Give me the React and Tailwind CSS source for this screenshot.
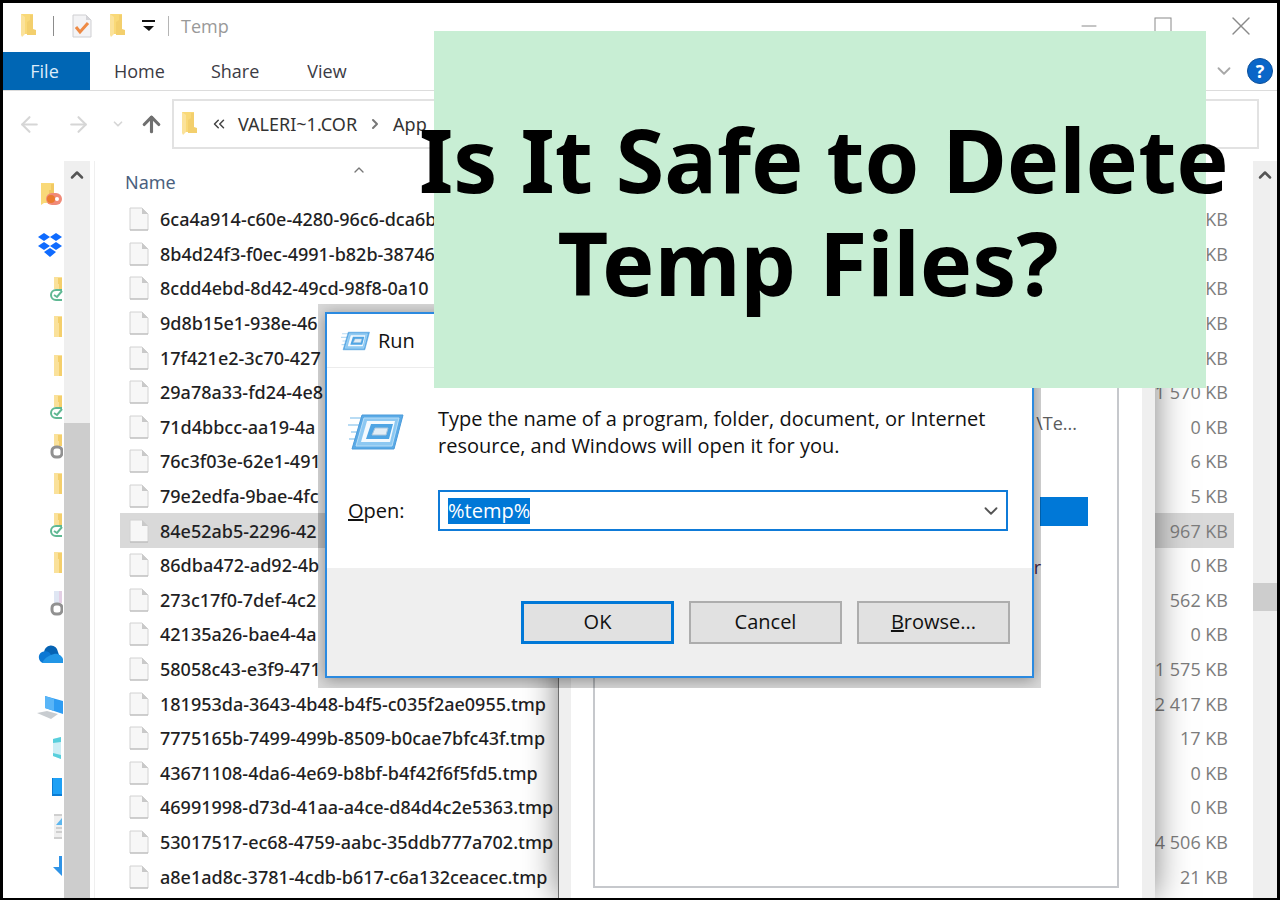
import { useEffect, useRef } from 'react';
import { ArrowLeft, ArrowRight, ArrowUp, ChevronDown, ChevronUp, ChevronRight, ChevronsLeft, Minus, X } from 'lucide-react';

const files = [
  { name: '6ca4a914-c60e-4280-96c6-dca6b', size: 'KB' },
  { name: '8b4d24f3-f0ec-4991-b82b-38746', size: 'KB' },
  { name: '8cdd4ebd-8d42-49cd-98f8-0a10', size: 'KB' },
  { name: '9d8b15e1-938e-46', size: 'KB' },
  { name: '17f421e2-3c70-427', size: 'KB' },
  { name: '29a78a33-fd24-4e8', size: '1 570 KB' },
  { name: '71d4bbcc-aa19-4a', size: '0 KB' },
  { name: '76c3f03e-62e1-491', size: '6 KB' },
  { name: '79e2edfa-9bae-4fc', size: '5 KB' },
  { name: '84e52ab5-2296-42', size: '967 KB', selected: true },
  { name: '86dba472-ad92-4b', size: '0 KB' },
  { name: '273c17f0-7def-4c2', size: '562 KB' },
  { name: '42135a26-bae4-4a', size: '0 KB' },
  { name: '58058c43-e3f9-471', size: '1 575 KB' },
  { name: '181953da-3643-4b48-b4f5-c035f2ae0955.tmp', size: '2 417 KB' },
  { name: '7775165b-7499-499b-8509-b0cae7bfc43f.tmp', size: '17 KB' },
  { name: '43671108-4da6-4e69-b8bf-b4f42f6f5fd5.tmp', size: '0 KB' },
  { name: '46991998-d73d-41aa-a4ce-d84d4c2e5363.tmp', size: '0 KB' },
  { name: '53017517-ec68-4759-aabc-35ddb777a702.tmp', size: '4 506 KB' },
  { name: 'a8e1ad8c-3781-4cdb-b617-c6a132ceacec.tmp', size: '21 KB' },
];

// Icons
const FolderIcon = () => (
  <svg width="18" height="26" viewBox="0 0 18 26" aria-hidden="true">
    <path d="M2 1h12v20H2z" fill="#f9d978" />
    <path d="M11 2h3v14l3 1v5H8V9l3-2z" fill="#f3cf6d" />
    <path d="M2 1l4 3v17l-3 3-1-2z" fill="#fbe29a" />
  </svg>
);

const PageIcon = () => (
  <svg className="block" width="20" height="24" viewBox="0 0 20 24" aria-hidden="true">
    <path d="M1 1h12l6 6v16H1z" fill="#f7f7f7" stroke="#d2d2d2" />
    <path d="M13 1v6h6z" fill="#c9c9c9" />
    <path d="M1 23h18" stroke="#b5b5b5" />
  </svg>
);

const PropertiesIcon = () => (
  <svg width="20" height="24" viewBox="0 0 20 24" aria-hidden="true">
    <path d="M1 1h13l5 5v17H1z" fill="#f3f3f5" stroke="#cfcfd2" />
    <path d="M14 1v5h5z" fill="#d4d4d8" />
    <path d="M4 13l4 5 8-9" fill="none" stroke="#ee8a45" strokeWidth="3" />
  </svg>
);

const RunIcon = ({ className }) => (
  <svg className={className} viewBox="0 0 56 38" aria-hidden="true">
    <path d="M2 5h14M0 12h12M3 19h8M1 26h7" stroke="#b9dcf4" strokeWidth="2" />
    <path d="M14 2h41L46 36H4z" fill="#5aaae6" stroke="#4b9bdb" strokeWidth="1" />
    <path d="M16 5h35l-7 28H8z" fill="#8cc8f2" stroke="#b9def7" strokeWidth="1" />
    <path d="M19 8h28l-5 21H13z" fill="#f4fafe" />
    <path d="M23 11h22l-4 15H18z" fill="#4fa5e4" />
    <path d="M27 15h13l-2 7H24z" fill="#e3eef6" stroke="#a9c6dd" />
  </svg>
);

const MaximizeIcon = () => (
  <svg width="18" height="18" viewBox="0 0 18 18" aria-hidden="true">
    <rect x="1" y="1" width="16" height="16" fill="none" stroke="currentColor" />
  </svg>
);

const NavFolder = ({ badge }) => (
  <svg width="14" height="28" viewBox="0 0 14 28" aria-hidden="true">
    <path d="M5 3h8v21H5z" fill="#fae19a" />
    <path d="M9 4h4v20h-3V10H9z" fill="#f4cf6c" />
    {badge === 'check' && (
      <>
        <path d="M0 15h14v13H0z" fill="#fff" />
        <path d="M13 16H7a5 5 0 1 0 0 10h6" fill="none" stroke="#5fb893" strokeWidth="2" />
        <path d="M5 21l3 2 5-6" fill="none" stroke="#5fb893" strokeWidth="2" />
      </>
    )}
    {badge === 'dot' && (
      <>
        <path d="M0 15h14v13H0z" fill="#fff" />
        <rect x="3" y="16" width="10" height="10" rx="4" fill="none" stroke="#919191" strokeWidth="3" />
      </>
    )}
  </svg>
);

const NavMusic = () => (
  <svg width="14" height="28" viewBox="0 0 14 28" aria-hidden="true">
    <path d="M5 3h8v12H5z" fill="#dfe6f3" />
    <path d="M10 3h3v12h-3z" fill="#e3cfe4" />
    <rect x="3" y="16" width="10" height="10" rx="4" fill="none" stroke="#919191" strokeWidth="3" />
  </svg>
);

const CreativeCloudFolder = () => (
  <svg width="24" height="26" viewBox="0 0 24 26" aria-hidden="true">
    <path d="M2 2h13v20H5l-3 2z" fill="#f9d978" />
    <path d="M12 3h3v19h-5V9h2z" fill="#f1c963" />
    <rect x="7" y="12" width="16" height="12" rx="6" fill="#f08a78" />
    <circle cx="12" cy="18" r="4" fill="#ea7a2c" />
    <circle cx="18" cy="18" r="2" fill="#fff" />
  </svg>
);

const DropboxIcon = () => (
  <svg width="26" height="26" viewBox="0 0 26 26" aria-hidden="true">
    <g fill="#0f6bff">
      <path d="M7 1l6 4-6 4-6-4zM19 1l6 4-6 4-6-4zM7 10l6 4-6 4-6-4zM19 10l6 4-6 4-6-4zM13 16l6 4-6 5-6-5z" />
    </g>
  </svg>
);

const OneDriveIcon = () => (
  <svg width="26" height="20" viewBox="0 0 26 20" aria-hidden="true">
    <path d="M7 8a7 7 0 0 1 14-1l2 6H7z" fill="#0563b4" />
    <path d="M6 18a6 6 0 0 1-1-11c4-2 8 0 9 3l8 8z" fill="#0c78d4" />
    <path d="M5 18c3-6 8-8 12-9 4-1 8 2 9 5v4z" fill="#2296e6" />
  </svg>
);

const ThisPcIcon = () => (
  <svg width="26" height="26" viewBox="0 0 26 26" aria-hidden="true">
    <path d="M8 1l18 5v13L8 13z" fill="#2e9cf2" />
    <path d="M8 1l9 3v12l-9-3z" fill="#59b5f7" />
    <path d="M0 18l10-2 11 3-7 5z" fill="#c8ccd0" />
  </svg>
);

const Objects3dIcon = () => (
  <svg width="12" height="24" viewBox="0 0 12 24" aria-hidden="true">
    <path d="M2 3l8-2v22l-8-3z" fill="#cdeef5" />
    <path d="M2 3l8-2v5L2 7zM2 17l8 2v4l-8-3z" fill="#58cfdc" />
  </svg>
);

const DesktopIcon = () => (
  <svg width="12" height="18" viewBox="0 0 12 18" aria-hidden="true">
    <path d="M1 0h10v18H1z" fill="#1ea0f5" />
    <path d="M1 16h10v2H1zM1 0h1v18H1z" fill="#0a7cd4" />
  </svg>
);

const DocumentsIcon = () => (
  <svg width="10" height="26" viewBox="0 0 10 26" aria-hidden="true">
    <path d="M1 1h8v24H1z" fill="#efefef" />
    <path d="M1 1h8M3 14h6M3 18h6M1 24h8" stroke="#cfcfcf" strokeWidth="2" />
    <path d="M3 11l6-7v7z" fill="#5cb6ee" />
  </svg>
);

const DownloadsIcon = () => (
  <svg width="10" height="22" viewBox="0 0 10 22" aria-hidden="true">
    <path d="M6 1h3v20l-9-9h6z" fill="#2f93e6" />
  </svg>
);

const Sidebar = () => (
  <nav className="flex w-[61px] shrink-0 flex-col pt-[5px] pr-px" aria-label="Navigation pane">
    <div className="flex h-14 items-center justify-end"><CreativeCloudFolder /></div>
    <div className="flex h-[46px] items-center justify-end"><DropboxIcon /></div>
    <div className="grid h-[354px] auto-rows-fr items-center justify-items-end">
      <NavFolder badge="check" />
      <NavFolder />
      <NavFolder />
      <NavFolder badge="check" />
      <NavFolder badge="dot" />
      <NavFolder />
      <NavFolder badge="check" />
      <NavFolder />
      <NavMusic />
    </div>
    <div className="flex h-[66px] items-center justify-end"><OneDriveIcon /></div>
    <div className="flex h-10 items-center justify-end"><ThisPcIcon /></div>
    <div className="grid h-[158px] auto-rows-fr items-center justify-items-end">
      <Objects3dIcon />
      <DesktopIcon />
      <DocumentsIcon />
      <DownloadsIcon />
    </div>
  </nav>
);

const TitleBar = () => (
  <div className="flex h-[49px] items-center justify-between pr-5 pb-1 pl-4">
    <div className="flex items-center">
      <FolderIcon />
      <span className="ml-4 h-5 w-px bg-[#8c8c8c]" />
      <div className="ml-[18px] flex items-center gap-4">
        <PropertiesIcon />
        <FolderIcon />
      </div>
      <svg className="ml-4" width="13" height="12" viewBox="0 0 13 12" aria-hidden="true">
        <path d="M0 1h13" stroke="#111" strokeWidth="2" />
        <path d="M1 6h11l-5 5z" fill="#111" />
      </svg>
      <span className="ml-[13px] h-5 w-px bg-[#b5b5b5]" />
      <h2 className="ml-3 text-lg text-[#999]">Temp</h2>
    </div>
    <div className="flex items-center gap-[53px] text-[#8a8a8a]">
      <button type="button" aria-label="Minimize"><Minus size={24} strokeWidth={1} /></button>
      <button type="button" aria-label="Maximize"><MaximizeIcon /></button>
      <button type="button" aria-label="Close"><X size={32} strokeWidth={1} /></button>
    </div>
  </div>
);

const Ribbon = () => (
  <div className="flex h-[39px] items-center justify-between border-b border-[#dcdcdc] pr-1">
    <div className="flex h-full items-center text-lg text-[#3b3b44]">
      <button type="button" className="h-full w-[87px] bg-[#0066b4] pr-1 text-[#dcecfa]">File</button>
      <button type="button" className="ml-6">Home</button>
      <button type="button" className="ml-[46px]">Share</button>
      <button type="button" className="ml-12">View</button>
    </div>
    <div className="flex items-center gap-3">
      <button type="button" aria-label="Expand ribbon" className="text-[#a8a8a8]"><ChevronDown size={22} strokeWidth={2} /></button>
      <button type="button" aria-label="Help" className="h-[26px] w-[26px] rounded-full border border-[#0b4f9a] bg-[#0a66c8] text-lg leading-6 font-bold text-white">?</button>
    </div>
  </div>
);

const AddressBar = () => (
  <div className="flex h-[70px] items-center pt-1 pr-[18px] pb-2 pl-3.5">
    <div className="flex items-center text-[#d6d6d6]">
      <button type="button" aria-label="Back"><ArrowLeft size={25} strokeWidth={2} /></button>
      <button type="button" aria-label="Forward" className="ml-6"><ArrowRight size={25} strokeWidth={2} /></button>
      <button type="button" aria-label="Recent locations" className="ml-5"><ChevronDown size={14} strokeWidth={3} /></button>
      <button type="button" aria-label="Up" className="ml-3.5 text-[#6f6f6f]"><ArrowUp size={25} strokeWidth={3} /></button>
    </div>
    <div className="ml-2 flex h-[50px] flex-1 items-center border-2 border-[#e2e2e2] pl-1.5 font-['Noto_Sans',sans-serif] text-lg text-[#333]">
      <FolderIcon />
      <ChevronsLeft className="ml-3 text-[#444]" size={18} strokeWidth={2} />
      <a href="#user" className="ml-2.5">VALERI~1.COR</a>
      <ChevronRight className="mx-2.5 text-[#777]" size={16} strokeWidth={3} />
      <a href="#appdata">App</a>
    </div>
  </div>
);

const FileTable = () => (
  <table className="mr-[19px] ml-[25px] h-[733px] flex-1 border-collapse text-lg leading-6 text-[#1f1f24]">
    <thead>
      <tr className="h-[41px]">
        <th className="pb-1 pl-[5px] text-left font-normal text-[#4a5f7e]">
          <div className="flex items-start">
            <span className="w-[226px] pt-1 font-['Noto_Sans',sans-serif]">Name</span>
            <ChevronUp className="-mt-1 text-[#777]" size={16} strokeWidth={2} />
          </div>
        </th>
        <th className="w-[90px]" aria-label="Size" />
      </tr>
    </thead>
    <tbody>
      {files.map((file) => (
        <tr key={file.name} className={file.selected ? 'bg-[#d9d9d9]' : ''}>
          <td className="pl-[9px] font-['Noto_Sans',sans-serif] font-medium">
            <div className="flex items-center gap-[11px]">
              <PageIcon />
              <span className="whitespace-nowrap">{file.name}</span>
            </div>
          </td>
          <td className="pr-[6px] text-right whitespace-nowrap text-[#7d7d7d]">{file.size}</td>
        </tr>
      ))}
    </tbody>
  </table>
);

// Window that stays behind the Run dialog
const BackWindow = () => (
  <div className="absolute top-[350px] bottom-0 left-[555px] flex w-[597px] border-l border-[#6e6e6e] bg-[#efefef] pr-[13px] pl-3 shadow-[0_0_32px_rgba(0,0,0,0.5)]">
    <div className="flex flex-1 flex-col bg-white pt-4 pr-[23px] pb-2.5 pl-[22px]">
      <div className="flex flex-1 flex-col items-end border-2 border-[#c6c8cc] pt-[39px] text-lg leading-[27px] text-[#5c5c5c]">
        <span className="mr-10">\Te...</span>
        <div className="mt-[60px] mr-[29px] h-[29px] w-12 bg-[#0078d7]" />
        <span className="mt-7 mr-[76px] text-[#4a2a50]">er</span>
      </div>
    </div>
  </div>
);

const RunDialog = () => {
  const inputRef = useRef(null);

  useEffect(() => {
    inputRef.current.focus();
    inputRef.current.select();
  }, []);

  return (
    <div className="absolute top-[301px] left-[315px] w-[723px] overflow-hidden bg-black/15 px-[7px] pt-2 pb-2.5">
      <form role="dialog" aria-label="Run" className="border-2 border-[#2b8ae0] bg-white text-xl text-[#111] shadow-[0_2px_14px_rgba(0,0,0,0.35)]">
        <div className="flex h-[54px] items-center gap-2 border-b border-[#ececec] pl-[14px]">
          <RunIcon className="h-5 w-[29px]" />
          <h2>Run</h2>
        </div>
        <div className="flex h-[200px] flex-col px-[21px] pt-[37px] pr-6">
          <div className="flex gap-[34px]">
            <RunIcon className="mt-2 h-[38px] w-14 shrink-0" />
            <p className="leading-[27px] whitespace-nowrap">
              Type the name of a program, folder, document, or Internet<br />resource, and Windows will open it for you.
            </p>
          </div>
          <div className="mt-[31px] flex items-center">
            <label htmlFor="open" className="w-[90px]"><u>O</u>pen:</label>
            <div className="flex h-[41px] flex-1 items-center border-2 border-[#0f7bd8] pr-1 pl-2">
              <input
                id="open"
                ref={inputRef}
                defaultValue="%temp%"
                className="min-w-0 flex-1 leading-[26px] outline-none selection:bg-[#0078d7] selection:text-white"
              />
              <button type="button" aria-label="Show recent commands"><ChevronDown className="text-[#555]" size={22} strokeWidth={2} /></button>
            </div>
          </div>
        </div>
        <div className="flex h-[108px] items-center justify-end gap-[15px] bg-[#efefef] pr-[22px]">
          <button type="submit" className="h-[43px] w-[153px] border-3 border-[#0078d7] bg-[#e1e1e1]">OK</button>
          <button type="button" className="h-[43px] w-[153px] border-2 border-[#adadad] bg-[#e1e1e1]">Cancel</button>
          <button type="button" className="h-[43px] w-[153px] border-2 border-[#adadad] bg-[#e1e1e1]"><u>B</u>rowse...</button>
        </div>
      </form>
    </div>
  );
};

const Banner = () => (
  <div className="absolute top-7 left-[431px] flex h-[357px] w-[772px] flex-col items-center bg-[#c8eed4] pt-[77px] pl-2">
    <h1 className="text-center font-['Noto_Sans',sans-serif] text-[88px] leading-[103px] font-bold whitespace-nowrap text-black">
      Is It Safe to Delete
      <span className="block pr-8">Temp Files?</span>
    </h1>
  </div>
);

function App() {
  return (
    <div className="relative flex min-h-screen flex-col overflow-hidden border-3 border-b-2 border-black bg-white font-['Open_Sans',sans-serif]">
      <TitleBar />
      <Ribbon />
      <AddressBar />
      <main className="flex flex-1">
        <Sidebar />
        <div className="flex w-[26px] shrink-0 flex-col items-center bg-[#efefef]">
          <ChevronUp className="mt-1 text-[#555]" size={20} strokeWidth={3} />
          <div className="mt-[238px] w-full flex-1 bg-[#cdcdcd]" />
        </div>
        <div className="ml-1 w-px bg-[#efefef]" />
        <FileTable />
        <div className="flex w-6 shrink-0 flex-col items-center bg-[#efefef]">
          <ChevronUp className="mt-1 text-[#555]" size={20} strokeWidth={3} />
          <div className="mt-[398px] h-7 w-full bg-[#cdcdcd]" />
        </div>
      </main>
      <BackWindow />
      <RunDialog />
      <Banner />
    </div>
  );
}

export default App;
